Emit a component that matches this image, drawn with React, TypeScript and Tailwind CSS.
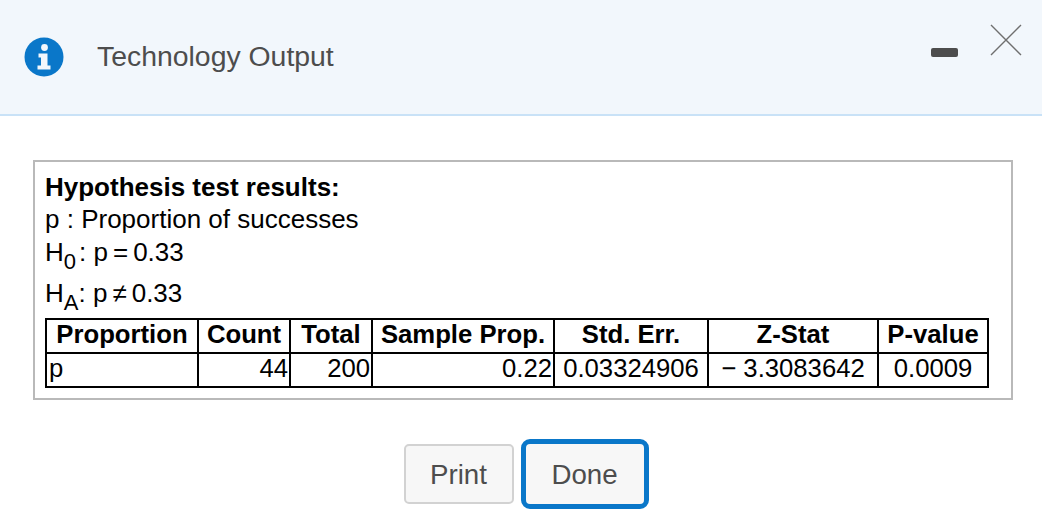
const columns = ["Proportion", "Count", "Total", "Sample Prop.", "Std. Err.", "Z-Stat", "P-value"];

function InfoIcon() {
  return (
    <svg width="40" height="40" viewBox="0 0 40 40" className="shrink-0 translate-y-[1px]">
      <circle cx="20" cy="20" r="19.5" fill="#0a77c9" />
      <circle cx="20.5" cy="10.5" r="3.4" fill="#f2f7fc" />
      <path d="M14.5 16.5h9v12h3v4h-13v-4h3.5v-8h-2.5z" fill="#f2f7fc" />
    </svg>
  );
}

function CloseIcon() {
  return (
    <svg width="32" height="32" viewBox="0 0 32 32" className="shrink-0">
      <path d="M1 1l30 30M31 1L1 31" stroke="#6f6f6f" strokeWidth="1.4" fill="none" />
    </svg>
  );
}

export default function App() {
  return (
    <div className="flex h-[516px] w-[1042px] flex-col overflow-hidden bg-white font-['Liberation_Sans',Arial,sans-serif] text-black">
      <header className="flex h-[116px] items-center border-b-2 border-[#c9e2f7] bg-[#f2f7fc] pb-[2px] pl-[24px] pr-[20px]">
        <InfoIcon />
        <h1 className="ml-[33px] flex-1 text-[28.4px] leading-none text-[#4d4d4d]">Technology Output</h1>
        <div className="h-[9px] w-[27px] translate-y-[-4px] rounded-[2px] bg-[#4d4d4d]" />
        <div className="ml-[32px] mt-[-32px]">
          <CloseIcon />
        </div>
      </header>

      <main className="mx-[33px] mt-[44px] h-[240px] w-[980px] border-2 border-[#b9b9b9] pl-[10px] pt-[11px] text-[26px]">
        <p className="h-[32px] font-bold leading-[28px]">Hypothesis test results:</p>
        <p className="h-[32px] leading-[28px]">p : Proportion of successes</p>
        <p className="h-[42px] leading-[30px]">
          H<sub className="-bottom-[8px] text-[22px] leading-none">0</sub><span className="ml-[3px]">:</span> p<span className="ml-[5px]">=</span><span className="ml-[5px]">0.33</span>
        </p>
        <p className="h-[39px] leading-[28px]">
          H<sub className="-bottom-[8px] text-[22px] leading-none">A</sub>: p<span className="ml-[5px]">≠</span><span className="ml-[5px]">0.33</span>
        </p>
        <table className="w-[943px] table-fixed border-collapse text-[25.7px]">
          <colgroup>
            <col className="w-[152px]" />
            <col className="w-[92px]" />
            <col className="w-[82px]" />
            <col className="w-[182px]" />
            <col className="w-[154px]" />
            <col className="w-[170px]" />
            <col className="w-[110px]" />
          </colgroup>
          <thead>
            <tr className="h-[34px]">
              {columns.map((c) => (
                <th key={c} className="border-2 border-black p-0 pb-[3px] text-center font-bold leading-[27px] whitespace-nowrap">{c}</th>
              ))}
            </tr>
          </thead>
          <tbody className="leading-[27px]">
            <tr className="h-[34px]">
              <td className="border-2 border-black pb-[3px] pl-[2px] text-left">p</td>
              <td className="border-2 border-black pb-[3px] pr-[1px] text-right">44</td>
              <td className="border-2 border-black pb-[3px] pr-[1px] text-right">200</td>
              <td className="border-2 border-black pb-[3px] pr-[1px] text-right">0.22</td>
              <td className="border-2 border-black pb-[3px] text-center">0.03324906</td>
              <td className="border-2 border-black pb-[3px] text-center">− 3.3083642</td>
              <td className="border-2 border-black pb-[3px] text-center">0.0009</td>
            </tr>
          </tbody>
        </table>
      </main>

      <footer className="mt-[39px] flex justify-center gap-[7px] pl-[10px]">
        <button className="mt-[5px] h-[60px] w-[110px] rounded-[5px] border-2 border-[#d2d2d2] bg-[#f7f7f7] pt-[1px] text-[27.7px] text-[#4d4d4d]">Print</button>
        <button className="h-[70px] w-[128px] rounded-[9px] border-[5px] border-[#0a77c9] bg-[#f7f7f7] pt-[1px] text-[27.7px] text-[#4d4d4d]">Done</button>
      </footer>
    </div>
  );
}
